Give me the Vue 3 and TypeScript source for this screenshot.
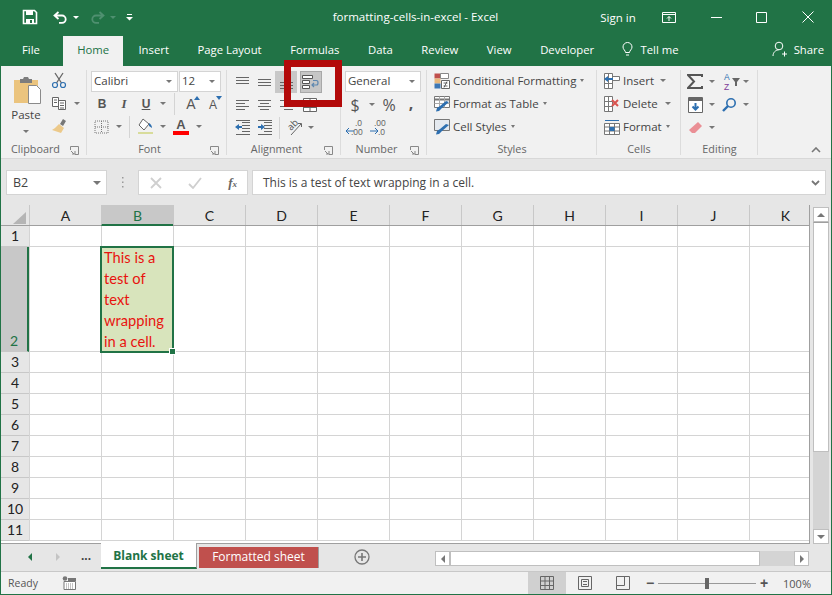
<script setup lang="ts">
type Seg = [number, number, number];
const lineIcons: Record<string, Seg[]> = {
  top: [[2, 15, 3], [2, 15, 6], [2, 15, 9]],
  mid: [[2, 15, 5], [2, 15, 8], [2, 15, 11]],
  bot: [[2, 15, 8], [2, 15, 11], [2, 15, 14]],
  left: [[2, 15, 3], [2, 11, 6], [2, 15, 9], [2, 11, 12]],
  center: [[2, 15, 3], [4, 13, 6], [2, 15, 9], [4, 13, 12]],
  right: [[2, 15, 3], [6, 15, 6], [2, 15, 9], [6, 15, 12]],
};
const tabs = ["Insert", "Page Layout", "Formulas", "Data", "Review", "View", "Developer"];
const columns = ["A", "B", "C", "D", "E", "F", "G", "H", "I", "J", "K"];
const rows = [1, 2, 3, 4, 5, 6, 7, 8, 9, 10, 11];
const wrapped = "This is a test of text wrapping in a cell.";
</script>

<template>
  <div class="app">
    <header class="titlebar">
      <div class="qat">
        <svg class="save" width="16" height="16" viewBox="0 0 16 16"><path d="M1.5 1.5h11l2 2v11h-13z" fill="none" stroke="#fff" stroke-width="1.6"/><path d="M4 2h7v4H4zM4 10h8v5H4z" fill="#fff"/><path d="M8 11h2v3H8z" fill="#217346"/></svg>
        <svg class="undo" width="15" height="13" viewBox="0 0 15 13"><path d="M5.5 1 1.5 4.5l4 3.500M2 4.500h7a3.700 3.700 0 0 1 0 7.400H6" fill="none" stroke="#fff" stroke-width="1.800"/></svg>
        <i class="caret white"></i>
        <svg class="redo" width="15" height="13" viewBox="0 0 15 13"><path d="M9.500 1l4 3.500-4 3.500M13 4.500H6a3.700 3.700 0 0 0 0 7.400h3" fill="none" stroke="#4f9070" stroke-width="1.800"/></svg>
        <i class="caret dim"></i>
        <svg class="custom" width="7" height="8" viewBox="0 0 7 8"><path d="M1 1h5v1H1zM0 4h7L3.500 7.500z" fill="#fff"/></svg>
      </div>
      <div class="title">formatting-cells-in-excel - Excel</div>
      <div class="winctl">
        <span class="signin">Sign in</span>
        <svg class="ctl-display" width="14" height="11" viewBox="0 0 14 11"><path d="M.5.500h13v10H.5zM.5 2.500h13M7 9V4.500M5 6.500l2-2 2 2" fill="none" stroke="#fff"/></svg>
        <svg class="ctl-min" width="11" height="11" viewBox="0 0 11 11"><path d="M0 5.500h11" stroke="#fff"/></svg>
        <svg class="ctl-max" width="11" height="11" viewBox="0 0 11 11"><path d="M.5.500h10v10H.5z" fill="none" stroke="#fff"/></svg>
        <svg class="ctl-close" width="12" height="12" viewBox="0 0 12 12"><path d="M.5.500l11 11M11.500.500l-11 11" stroke="#fff"/></svg>
      </div>
    </header>

    <nav class="tabbar">
      <span class="tab file">File</span>
      <span class="tab home">Home</span>
      <span v-for="t in tabs" :key="t" class="tab">{{ t }}</span>
      <span class="tellme">
        <svg width="11" height="15" viewBox="0 0 11 15"><path d="M3.500 10.500C3.500 8.500 1 7.500 1 5a4.500 4.500 0 0 1 9 0c0 2.500-2.500 3.500-2.500 5.500zM4 13h3" fill="none" stroke="#fff"/></svg>
        Tell me
      </span>
      <span class="share">
        <svg width="16" height="16" viewBox="0 0 16 16"><circle cx="7" cy="5" r="3.800" fill="none" stroke="#fff"/><path d="M1 15c0-3.500 2.500-6 5.500-6M10 13h5M12.500 10.500v5" fill="none" stroke="#fff"/></svg>
        Share
      </span>
    </nav>

    <section class="ribbon">
      <div class="group clipboard">
        <div class="body clip-body">
          <div class="paste">
            <svg width="30" height="28" viewBox="0 0 30 28"><rect x="1" y="3" width="24" height="23" fill="#ebc47e"/><path d="M7 2h3l1-2h4l1 2h3v4H7z" fill="#7d7d7d"/><path d="M15.500 8.500h8l4 4v14h-12z" fill="#fff" stroke="#8a8a8a"/></svg>
            <span>Paste</span>
            <i class="caret"></i>
          </div>
          <div class="clip-tools">
            <svg width="16" height="17" viewBox="0 0 16 17"><path d="M4 1l6.500 10M12 1 5.500 11" stroke="#666" stroke-width="1.300"/><circle cx="4" cy="13" r="2.500" fill="none" stroke="#2d6fb0" stroke-width="1.200"/><circle cx="12" cy="13" r="2.500" fill="none" stroke="#2d6fb0" stroke-width="1.200"/></svg>
            <span class="tool-row">
              <svg width="16" height="15" viewBox="0 0 16 15"><path d="M1.500 1.500h6v9h-6zM7.500 4.500h7v9h-7zM3 4h3M3 6.500h3M9 7h4M9 9.500h4M9 12h4" fill="#fff" stroke="#666"/></svg>
              <i class="caret"></i>
            </span>
            <svg width="16" height="16" viewBox="0 0 16 16"><path d="M9 6l3-5 3 2-3 5z" fill="#777"/><path d="M8 6l5 4-3 5-9-3 3-2z" fill="#ecc98a"/></svg>
          </div>
        </div>
        <div class="label lab-launch clip-label">Clipboard</div>
        <svg class="launcher" width="9" height="9" viewBox="0 0 9 9"><path d="M.5 4V.5h8v8H5M1 5l3 3M2 8h3V5" fill="none" stroke="#888"/></svg>
      </div>

      <div class="group font">
        <div class="body">
          <div class="row combos">
            <div class="combo font-name">Calibri<i class="caret"></i></div>
            <div class="combo font-size">12<i class="caret"></i></div>
          </div>
          <div class="row font-row2">
            <span class="ib fmt b">B</span>
            <span class="ib fmt it">I</span>
            <span class="ib fmt un">U</span>
            <span class="cw"><i class="caret"></i></span>
            <span class="vsep"></span>
            <span class="ib grow">A<svg width="6" height="4" viewBox="0 0 6 4"><path d="M0 4l3-4 3 4z" fill="#2d6fb0"/></svg></span>
            <span class="ib shrink">A<svg width="6" height="4" viewBox="0 0 6 4"><path d="M0 0h6L3 4z" fill="#2d6fb0"/></svg></span>
          </div>
          <div class="row font-row3">
            <span class="ib">
              <svg width="16" height="14" viewBox="0 0 16 14"><path d="M1 1h13v12H1zM7.500 1v12M1 7h13" fill="none" stroke="#777" stroke-dasharray="1 1"/></svg>
            </span>
            <span class="cw"><i class="caret"></i></span>
            <span class="vsep"></span>
            <span class="ib">
              <svg width="18" height="17" viewBox="0 0 18 17"><path d="M6 1l6 5-5 6-5-5z" fill="#fff" stroke="#666"/><path d="M12 5c2 1 3 3 3 5l-3-2z" fill="#2d6fb0"/><path d="M1 14h15v2H1z" fill="#d8dc9b"/></svg>
            </span>
            <span class="cw"><i class="caret"></i></span>
            <span class="ib color">A<b></b></span>
            <span class="cw"><i class="caret"></i></span>
          </div>
        </div>
        <div class="label lab-launch">Font</div>
        <svg class="launcher" width="9" height="9" viewBox="0 0 9 9"><path d="M.5 4V.5h8v8H5M1 5l3 3M2 8h3V5" fill="none" stroke="#888"/></svg>
      </div>

      <div class="group align">
        <div class="body">
          <div class="row">
            <span class="ib"><svg width="17" height="16" viewBox="0 0 17 16"><path v-for="(s, i) in lineIcons.top" :key="i" :d="`M${s[0]} ${s[2]}.5H${s[1]}`" stroke="#666"/></svg></span>
            <span class="ib"><svg width="17" height="16" viewBox="0 0 17 16"><path v-for="(s, i) in lineIcons.mid" :key="i" :d="`M${s[0]} ${s[2]}.5H${s[1]}`" stroke="#666"/></svg></span>
            <span class="ib on-soft"><svg width="17" height="16" viewBox="0 0 17 16"><path v-for="(s, i) in lineIcons.bot" :key="i" :d="`M${s[0]} ${s[2]}.5H${s[1]}`" stroke="#666"/></svg></span>
            <span class="ib wrap on">
              <svg width="18" height="16" viewBox="0 0 18 16"><path d="M.5 1.500h10v3H.5zM.5 6.500h7v3H.5zM.5 11.500h7v3H.5z" fill="#fff" stroke="#555"/><path d="M11 6.500h3.500c2 0 2 4.500 0 4.500H10M12 9l-2 2 2 2" fill="none" stroke="#5d87b0" stroke-width="1.200"/></svg>
            </span>
          </div>
          <div class="row">
            <span class="ib"><svg width="17" height="16" viewBox="0 0 17 16"><path v-for="(s, i) in lineIcons.left" :key="i" :d="`M${s[0]} ${s[2]}.5H${s[1]}`" stroke="#666"/></svg></span>
            <span class="ib"><svg width="17" height="16" viewBox="0 0 17 16"><path v-for="(s, i) in lineIcons.center" :key="i" :d="`M${s[0]} ${s[2]}.5H${s[1]}`" stroke="#666"/></svg></span>
            <span class="ib"><svg width="17" height="16" viewBox="0 0 17 16"><path v-for="(s, i) in lineIcons.right" :key="i" :d="`M${s[0]} ${s[2]}.5H${s[1]}`" stroke="#666"/></svg></span>
            <span class="ib wrap">
              <svg width="18" height="16" viewBox="0 0 18 16"><path d="M1.500 1.500h13v13h-13zM1.500 5.500h13M1.500 10.500h13M8 1.500v4M8 10.500v4" fill="#fff" stroke="#666"/></svg>
            </span>
          </div>
          <div class="row">
            <span class="ib"><svg width="17" height="16" viewBox="0 0 17 16"><path d="M8 2.500h8M8 5.500h8M8 8.500h8M8 11.500h8M2 14.500h14M2 .5h14" stroke="#666"/><path d="M1 7l4-3v2h3v2H5v2z" fill="#2d6fb0"/></svg></span>
            <span class="ib"><svg width="17" height="16" viewBox="0 0 17 16"><path d="M8 2.500h8M8 5.500h8M8 8.500h8M8 11.500h8M2 14.500h14M2 .5h14" stroke="#666"/><path d="M9 7 5 4v2H2v2h3v2z" fill="#2d6fb0"/></svg></span>
            <span class="vsep"></span>
            <span class="ib orient"><svg width="18" height="16" viewBox="0 0 18 16"><path d="M4 15 14 4M11 3.500h3.500V7" fill="none" stroke="#666"/></svg><em>ab</em></span>
            <span class="cw narrow"><i class="caret"></i></span>
          </div>
        </div>
        <div class="label lab-launch">Alignment</div>
        <svg class="launcher" width="9" height="9" viewBox="0 0 9 9"><path d="M.5 4V.5h8v8H5M1 5l3 3M2 8h3V5" fill="none" stroke="#888"/></svg>
      </div>

      <div class="group number">
        <div class="body">
          <div class="row"><div class="combo num-format">General<i class="caret"></i></div></div>
          <div class="row num-row2">
            <span class="ib sym">$</span>
            <span class="cw"><i class="caret"></i></span>
            <span class="ib sym pct">%</span>
            <span class="ib sym comma">,</span>
          </div>
          <div class="row num-row3">
            <span class="ib dec"><svg width="8" height="6" viewBox="0 0 8 6"><path d="M3 0 0 3l3 3M0 3h8" fill="none" stroke="#2d6fb0"/></svg><small class="d1">.0</small><small class="d2">.00</small></span>
            <span class="ib dec"><small class="d1 r">.00</small><svg class="ar" width="8" height="6" viewBox="0 0 8 6"><path d="M5 0l3 3-3 3M8 3H0" fill="none" stroke="#2d6fb0"/></svg><small class="d2 r">.0</small></span>
          </div>
        </div>
        <div class="label lab-launch">Number</div>
        <svg class="launcher" width="9" height="9" viewBox="0 0 9 9"><path d="M.5 4V.5h8v8H5M1 5l3 3M2 8h3V5" fill="none" stroke="#888"/></svg>
      </div>

      <div class="group styles">
        <div class="body">
          <div class="cmd">
            <svg width="16" height="16" viewBox="0 0 16 16"><path d="M.5.500h6v5h-6z" fill="#c0504d"/><path d="M6.500.500h8v5h-8z" fill="#fff" stroke="#888"/><path d="M.5 5.500h6v5h-6z" fill="#e9b87c"/><path d="M.5 10.500h6v5h-6z" fill="#3e78b5"/><path d="M7.500 7.500h8v8h-8z" fill="#fff" stroke="#666"/><path d="M9.500 10h4M9.500 13h4M10 14.500l3-6" stroke="#444" stroke-width=".8"/></svg>
            Conditional Formatting<i class="caret sm"></i>
          </div>
          <div class="cmd">
            <svg width="16" height="16" viewBox="0 0 16 16"><path d="M.5.500h15v11H.5z" fill="#fff" stroke="#777"/><path d="M.5 3.500h15" stroke="#777" stroke-width="2"/><path d="M5.500.500v11M10.500.500v11M.5 7.500h15" stroke="#aaa"/><path d="M15 6 8 12 5 15 2 15.500 3 12 6 10 12 5z" fill="#2d6fb0"/></svg>
            Format as Table<i class="caret sm"></i>
          </div>
          <div class="cmd">
            <svg width="16" height="16" viewBox="0 0 16 16"><path d="M.5.500h15v11H.5z" fill="#e4e9ef" stroke="#777"/><path d="M15 6 8 12 5 15 2 15.500 3 12 6 10 12 5z" fill="#2d6fb0"/></svg>
            Cell Styles<i class="caret sm"></i>
          </div>
        </div>
        <div class="label">Styles</div>
      </div>

      <div class="group cells">
        <div class="body">
          <div class="cmd">
            <svg width="16" height="16" viewBox="0 0 16 16"><path d="M.5.500h8v15h-8zM.5 5.500h8M.5 10.500h8M4.500.500v15M8.500 3.500h7v4h-7z" fill="#fff" stroke="#777"/><path d="M0 6l4-3v2h5v2H4v2z" fill="#2d6fb0"/></svg>
            Insert<i class="caret wide1"></i>
          </div>
          <div class="cmd">
            <svg width="16" height="16" viewBox="0 0 16 16"><path d="M.5.500h8v15h-8zM.5 5.500h8M.5 10.500h8M4.500.500v15" fill="#fff" stroke="#777"/><path d="M8 4l6 6M14 4l-6 6" stroke="#d9534f" stroke-width="2"/></svg>
            Delete<i class="caret wide2"></i>
          </div>
          <div class="cmd">
            <svg width="16" height="16" viewBox="0 0 16 16"><path d="M.5 4.500h15v11H.5zM.5 8h15M.5 12h15M5.500 4.500v11M10.500 4.500v11" fill="#fff" stroke="#777"/><path d="M5.500 8h5v4h-5z" fill="#2d6fb0"/><path d="M1 1.500h14" stroke="#2d6fb0"/></svg>
            Format<i class="caret sm"></i>
          </div>
        </div>
        <div class="label">Cells</div>
      </div>

      <div class="group editing">
        <div class="body">
          <div class="row ed-row">
            <span class="ib"><svg width="16" height="15" viewBox="0 0 16 15"><path d="M15 3V1H1l6 6.500L1 14h14v-2" fill="none" stroke="#555" stroke-width="2"/></svg></span>
            <span class="cw"><i class="caret"></i></span>
            <span class="ib az"><b>A</b><b>Z</b><svg width="8" height="8" viewBox="0 0 8 8"><path d="M0 0h8L5 4v4H3V4z" fill="#666"/></svg></span>
            <span class="cw tight"><i class="caret"></i></span>
          </div>
          <div class="row ed-row">
            <span class="ib"><svg width="15" height="16" viewBox="0 0 15 16"><path d="M.5.500h14v15H.5z" fill="#fff" stroke="#666"/><path d="M1 1h13v3H1z" fill="#666"/><path d="M7.500 6v6M4.500 9.500l3 3 3-3" fill="none" stroke="#2d6fb0" stroke-width="2"/></svg></span>
            <span class="cw"><i class="caret"></i></span>
            <span class="ib"><svg width="16" height="16" viewBox="0 0 16 16"><circle cx="10" cy="6" r="4.200" fill="none" stroke="#2d6fb0" stroke-width="1.600"/><path d="M7 9l-5 5" stroke="#2d6fb0" stroke-width="2.400"/></svg></span>
            <span class="cw tight"><i class="caret"></i></span>
          </div>
          <div class="row ed-row">
            <span class="ib"><svg width="15" height="14" viewBox="0 0 15 14"><path d="M10 1l4 4-7 7H4L1 9z" fill="#ea8f95"/></svg></span>
            <span class="cw"><i class="caret"></i></span>
          </div>
        </div>
        <div class="label">Editing</div>
      </div>

      <svg class="collapse" width="10" height="6" viewBox="0 0 10 6"><path d="M1 5l4-4 4 4" fill="none" stroke="#777" stroke-width="1.600"/></svg>
    </section>

    <section class="formula">
      <div class="namebox">B2<i class="caret big"></i></div>
      <svg class="grip" width="3" height="11" viewBox="0 0 3 11"><path d="M1 0h1.500v1.500H1zM1 4.500h1.500V6H1zM1 9h1.500v1.500H1z" fill="#999"/></svg>
      <div class="fx-box">
        <svg width="12" height="12" viewBox="0 0 12 12"><path d="M1 1l10 10M11 1 1 11" stroke="#cfcfcf" stroke-width="1.800"/></svg>
        <svg width="14" height="12" viewBox="0 0 14 12"><path d="M1 7l4 4 8-10" fill="none" stroke="#cfcfcf" stroke-width="1.800"/></svg>
        <span class="fx">f<small>x</small></span>
      </div>
      <div class="input">This is a test of text wrapping in a cell.<svg width="9" height="6" viewBox="0 0 9 6"><path d="M1 1l3.500 3.500L8 1" fill="none" stroke="#777" stroke-width="1.800"/></svg></div>
    </section>

    <section class="main">
      <div class="sheet">
        <div class="colhead">
          <div class="corner"><svg width="13" height="12" viewBox="0 0 13 12"><path d="M13 0v12H0z" fill="#b5b5b5"/></svg></div>
          <div v-for="c in columns" :key="c" class="col" :class="{ sel: c === 'B' }">{{ c }}</div>
        </div>
        <div v-for="r in rows" :key="r" class="gridrow" :class="{ tall: r === 2 }">
          <div class="rowhead" :class="{ sel: r === 2 }">{{ r }}</div>
          <div v-for="c in columns" :key="c" class="cell" :class="{ active: r === 2 && c === 'B' }">
            <template v-if="r === 2 && c === 'B'">{{ wrapped }}</template>
          </div>
        </div>
      </div>
      <div class="vscroll">
        <div class="sbtn"><i class="tri up"></i></div>
        <div class="vthumb"></div>
        <div class="vtrack"></div>
        <div class="sbtn"><i class="tri down"></i></div>
      </div>
    </section>

    <section class="sheetbar">
      <div class="nav">
        <i class="tri left green"></i>
        <i class="tri right faint"></i>
        <b class="dots">...</b>
      </div>
      <div class="stab active">Blank sheet</div>
      <div class="stab colored">Formatted sheet</div>
      <svg class="plus" width="16" height="16" viewBox="0 0 16 16"><circle cx="8" cy="8" r="7" fill="none" stroke="#777" stroke-width="1.300"/><path d="M8 4v8M4 8h8" stroke="#777" stroke-width="1.600"/></svg>
      <div class="hscroll">
        <div class="hbtn"><i class="tri left"></i></div>
        <div class="hthumb"></div>
        <div class="htrack"></div>
        <div class="hbtn"><i class="tri right"></i></div>
      </div>
    </section>

    <footer class="status">
      <span class="ready">Ready</span>
      <svg class="macro" width="14" height="14" viewBox="0 0 14 14"><circle cx="3" cy="2.500" r="2.300" fill="#777"/><path d="M2 5.500h11.500v8H2z" fill="#fff" stroke="#777"/><path d="M6 2h8v3H6z" fill="#777"/><path d="M4 8h8M4 10h8M4 12h8" stroke="#888" stroke-dasharray="1 1"/></svg>
      <div class="views">
        <span class="view on"><svg width="14" height="14" viewBox="0 0 14 14"><path d="M.5.500h13v13H.5zM.5 5h13M.5 9.500h13M5 .5v13M9.500.5v13" fill="none" stroke="#666"/></svg></span>
        <span class="view"><svg width="14" height="14" viewBox="0 0 14 14"><path d="M.5.500h13v13H.5z" fill="none" stroke="#666"/><path d="M3.500 3.500h7v7h-7zM5 5.500h4M5 8.500h4" fill="none" stroke="#666"/></svg></span>
        <span class="view"><svg width="14" height="14" viewBox="0 0 14 14"><path d="M.5.500h13v13H.5zM.5 9.500h8V.5" fill="none" stroke="#666"/></svg></span>
      </div>
      <div class="zoom">
        <span class="zbtn">−</span>
        <span class="slider"><b></b></span>
        <span class="zbtn">+</span>
      </div>
      <span class="pct-label">100%</span>
    </footer>

    <div class="callout"></div>
  </div>
</template>

<style>
html, body { margin: 0; padding: 0; }
</style>

<style scoped>
.app {
  position: relative;
  width: 832px;
  height: 595px;
  box-sizing: border-box;
  border: 1px solid #217346;
  border-top: 0;
  display: flex;
  flex-direction: column;
  overflow: hidden;
  background: #e6e6e6;
  font-family: "Open Sans", "Noto Sans", sans-serif;
  font-size: 11.5px;
  color: #444;
}
.titlebar {
  height: 36px;
  flex: none;
  background: #217346;
  display: grid;
  grid-template-columns: 1fr auto 1fr;
  align-items: center;
  color: #fff;
  font-size: 11.5px;
}
.qat { display: flex; align-items: center; padding-left: 21px; padding-bottom: 2px; }
.undo { margin-left: 15px; }
.qat .caret { margin-left: 5px; }
.redo { margin-left: 11px; }
.custom { margin-left: 10px; }
.caret {
  display: inline-block;
  width: 0;
  height: 0;
  border-left: 3px solid transparent;
  border-right: 3px solid transparent;
  border-top: 3px solid #777;
}
.caret.white { border-top-color: #fff; }
.caret.dim { border-top-color: #4f9070; }
.caret.sm { border-left-width: 2.500px; border-right-width: 2.500px; margin-left: 1px; }
.caret.big { border-left-width: 4px; border-right-width: 4px; border-top-width: 4px; }
.title { text-align: center; padding-bottom: 4px; margin-left: -1px; }
.winctl { display: flex; align-items: center; padding-left: 102px; padding-bottom: 2px; }
.ctl-display { margin-left: 26px; }
.ctl-min { margin-left: 35px; }
.ctl-max { margin-left: 34px; }
.ctl-close { margin-left: 35px; }

.tabbar {
  height: 30px;
  flex: none;
  background: #217346;
  display: flex;
  align-items: stretch;
  color: #fff;
  font-size: 11.300px;
}
.tab {
  padding: 0 14.300px 4px;
  display: flex;
  align-items: center;
}
.tab.file { margin-left: 6.700px; }
.tab.home {
  margin-left: 9px;
  margin-right: 1px;
  width: 60px;
  box-sizing: border-box;
  justify-content: center;
  background: #f1f1f1;
  color: #217346;
}
.tellme { display: flex; align-items: center; gap: 7px; margin-left: 14px; padding-bottom: 4px; }
.share { display: flex; align-items: center; gap: 6px; margin-left: auto; padding: 0 7px 4px 0; }

.ribbon {
  position: relative;
  height: 92px;
  flex: none;
  display: flex;
  background: #f1f1f1;
  border-bottom: 1px solid #d8d8d8;
}
.group {
  position: relative;
  display: flex;
  flex-direction: column;
  box-sizing: border-box;
  padding-top: 4px;
}
.group::after {
  content: "";
  position: absolute;
  right: 0;
  top: 4px;
  bottom: 3px;
  width: 1px;
  background: #dcdcdc;
}
.clipboard { width: 86px; }
.font { width: 140px; }
.align { width: 114px; }
.number { width: 86px; }
.styles { width: 170px; }
.cells { width: 84px; }
.editing { width: 77px; }
.body { height: 71px; }
.label {
  text-align: center;
  font-size: 10.800px;
  color: #666;
  line-height: 18px;
}
.lab-launch { padding-right: 15px; }
.clip-label { padding-right: 17px; }
.launcher { position: absolute; right: 8px; bottom: 3px; }
.row { display: flex; align-items: center; height: 23px; }
.ib {
  width: 22px;
  height: 22px;
  display: inline-flex;
  align-items: center;
  justify-content: center;
  flex: none;
  box-sizing: border-box;
}
.cw { width: 12px; display: inline-flex; justify-content: center; flex: none; }
.vsep { width: 1px; height: 22px; background: #d4d4d4; flex: none; }

.clip-body { display: flex; }
.paste {
  width: 40px;
  margin-left: 7px;
  display: flex;
  flex-direction: column;
  align-items: center;
  padding-top: 7px;
  box-sizing: border-box;
  color: #444;
}
.paste span { line-height: 17px; margin: 1px 4px 0 0; }
.paste .caret { margin: 7px 5px 0 0; }
.clip-tools {
  display: flex;
  flex-direction: column;
  align-items: flex-start;
  padding: 2px 0 0 3px;
  gap: 7px;
}
.tool-row { display: flex; align-items: center; gap: 7px; height: 15px; }

.font .body { padding-left: 3px; }
.combos { gap: 1px; height: 22px; margin-left: 1px; }
.combo {
  height: 21px;
  box-sizing: border-box;
  background: #fff;
  border: 1px solid #d4d4d4;
  display: flex;
  align-items: center;
  justify-content: space-between;
  padding: 0 5px 2px 2px;
  font-size: 11.500px;
}
.combo .caret { margin-top: 2px; }
.font-name { width: 87px; }
.font-size { width: 42px; }
.fmt { font-family: "Liberation Sans", sans-serif; font-size: 12px; color: #555; }
.fmt.b { font-weight: 700; }
.fmt.it { font-style: italic; font-family: "Liberation Serif", serif; font-weight: 700; font-size: 13px; }
.fmt.un { text-decoration: underline; font-weight: 700; }
.font-row2 .vsep { margin: 0 5px 0 5px; }
.font-row2 { padding-left: 1px; }
.grow, .shrink { font-family: "Liberation Sans", sans-serif; color: #555; font-size: 14px; position: relative; }
.shrink { font-size: 12px; padding-top: 2px; }
.grow svg, .shrink svg { position: absolute; right: 2px; top: 3px; }
.font-row3 { padding-left: 1px; }
.font-row3 .vsep { margin: 0 5px 0 4px; }
.font-row3 .cw { width: 12px; }
.color {
  flex-direction: column;
  color: #555;
  font-family: "Liberation Sans", sans-serif;
  font-size: 13px;
  font-weight: 700;
  line-height: 13px;
  width: 24px;
}
.color b { display: block; width: 16px; height: 4px; background: #f00; }

.align .body { padding-left: 4px; }
.on-soft { background: #c8c8c8; }
.ib.wrap { margin-left: 3px; }
.ib.on { background: #c6c6c6; border: 1px solid #a8a8a8; }
.align .vsep { margin: 0 5px 0 4px; }
.orient { position: relative; }
.orient em {
  position: absolute;
  font-style: normal;
  font-size: 9.500px;
  color: #555;
  transform: rotate(-45deg);
  left: 2px;
  top: 1px;
}
.narrow { width: 8px; }

.number .body { padding-left: 4px; }
.num-format { width: 76px; }
.num-row2 { padding-left: 0; margin-left: -1px; }
.num-row2 .cw { width: 12px; }
.sym { font-size: 16px; color: #555; }
.comma { font-weight: 700; padding-bottom: 4px; }
.num-row3 { margin-left: -2px; gap: 1px; }
.dec { position: relative; font-size: 8.500px; flex-direction: column; align-items: flex-start; padding-left: 3px; color: #666; }
.dec svg { position: absolute; left: 3px; top: 11px; }
.dec small { font-size: 8.500px; line-height: 9px; font-family: "Liberation Sans", sans-serif; }
.d1 { padding-left: 9px; }
.d2 { padding-left: 5px; }
.d1.r { padding-left: 5px; }
.d2.r { padding-left: 9px; margin-top: 0; }
.dec .ar { left: 4px; }

.styles .body, .cells .body { padding-left: 7px; }
.cmd {
  display: flex;
  align-items: center;
  height: 23px;
  box-sizing: border-box;
  padding-bottom: 2px;
  gap: 3px;
  white-space: nowrap;
  color: #444;
}
.cmd .caret { border-top-width: 3px; }
.wide1 { margin-left: 3px; }
.wide2 { margin-left: 4px; }

.ed-row { padding-left: 3px; }
.ed-row .cw { width: 12px; }
.az { position: relative; flex-direction: column; align-items: flex-start; padding-left: 6px; font-family: "Liberation Sans", sans-serif; }
.az b { font-weight: 400; font-size: 8.500px; line-height: 10px; color: #2d6fb0; }
.az b + b { color: #7d3c98; }
.az svg { position: absolute; right: 0; top: 7px; }
.tight { width: 10px; }
.collapse { position: absolute; right: 10px; bottom: 5px; }

.formula {
  height: 46px;
  flex: none;
  box-sizing: border-box;
  padding-top: 11px;
  display: flex;
  align-items: flex-start;
  background: #e6e6e6;
}
.namebox, .fx-box, .input {
  height: 25px;
  box-sizing: border-box;
  background: #fff;
  border: 1px solid #d4d4d4;
  display: flex;
  align-items: center;
}
.namebox {
  width: 101px;
  margin-left: 5px;
  justify-content: space-between;
  padding: 0 5px 0 6px;
  font-size: 12.500px;
}
.grip { margin: 7px 14px 0 14px; }
.fx-box { width: 110px; padding: 0 10px 0 11px; justify-content: space-between; }
.fx { font-family: "Liberation Serif", serif; font-style: italic; font-weight: 700; font-size: 13px; color: #666; }
.fx small { font-size: 9px; }
.input {
  width: 574px;
  margin-left: 4px;
  justify-content: space-between;
  padding: 0 5px 0 10px;
  font-size: 12px;
}

.main {
  height: 339px;
  flex: none;
  display: flex;
  background: #e6e6e6;
}
.sheet {
  width: 809px;
  flex: none;
  height: 339px;
  box-sizing: border-box;
  border-right: 1px solid #9f9f9f;
  border-bottom: 1px solid #9f9f9f;
  background: #fff;
  overflow: hidden;
  font-family: Lato, sans-serif;
  font-size: 14px;
  color: #222;
}
.colhead {
  display: flex;
  height: 21px;
  box-sizing: border-box;
  border-bottom: 1px solid #9f9f9f;
  background: #e6e6e6;
}
.corner {
  width: 28px;
  flex: none;
  box-sizing: border-box;
  padding: 5px 0 0 12px;
}
.col {
  width: 72px;
  flex: none;
  box-sizing: border-box;
  text-align: center;
  line-height: 22px;
  border-left: 1px solid #c8c8c8;
}
.col.sel {
  background: #c8c8c8;
  color: #217346;
  border-bottom: 2px solid #217346;
  height: 21px;
}
.gridrow { display: flex; height: 21px; }
.gridrow.tall { height: 105px; }
.rowhead {
  width: 28px;
  flex: none;
  box-sizing: border-box;
  background: #e6e6e6;
  border-bottom: 1px solid #c8c8c8;
  display: flex;
  align-items: flex-end;
  justify-content: center;
  line-height: 20px;
}
.rowhead.sel {
  background: #c8c8c8;
  color: #217346;
  border-right: 2px solid #217346;
}
.cell {
  width: 72px;
  flex: none;
  box-sizing: border-box;
  border-left: 1px solid #d4d4d4;
  border-bottom: 1px solid #d4d4d4;
}
.gridrow .cell:first-of-type { border-left-color: #c8c8c8; }
.cell.active {
  position: relative;
  z-index: 2;
  background: #d8e4bc;
  color: #e8130f;
  outline: 2px solid #217346;
  outline-offset: -1px;
  border: 0;
  padding: 0 2px 0 3px;
  display: flex;
  align-items: flex-end;
  font-size: 14.700px;
  line-height: 21px;
}
.cell.active::after {
  content: "";
  position: absolute;
  right: -3px;
  bottom: -3px;
  width: 5px;
  height: 5px;
  background: #217346;
  border: 1px solid #fff;
}
.vscroll {
  width: 16px;
  margin: 2px 0 0 3px;
  height: 337px;
  display: flex;
  flex-direction: column;
}
.sbtn, .hbtn {
  flex: none;
  background: #fff;
  border: 1px solid #bfbfbf;
  box-sizing: border-box;
  display: flex;
  align-items: center;
  justify-content: center;
}
.sbtn { height: 15px; }
.vthumb { height: 230px; flex: none; background: #fff; border: 1px solid #bfbfbf; border-top-color: #9f9f9f; box-sizing: border-box; }
.vtrack { flex: 1; background: #d4d4d4; }
.tri { display: inline-block; width: 0; height: 0; }
.tri.up { border-left: 4px solid transparent; border-right: 4px solid transparent; border-bottom: 4px solid #777; }
.tri.down { border-left: 4px solid transparent; border-right: 4px solid transparent; border-top: 4px solid #777; }
.tri.left { border-top: 4px solid transparent; border-bottom: 4px solid transparent; border-right: 4px solid #777; }
.tri.right { border-top: 4px solid transparent; border-bottom: 4px solid transparent; border-left: 4px solid #777; }
.tri.green { border-right-color: #217346; }
.tri.faint { border-left-color: #c4c4c4; }

.sheetbar {
  height: 28px;
  flex: none;
  display: flex;
  align-items: flex-start;
  background: #e6e6e6;
  border-bottom: 1px solid #c8c8c8;
  box-sizing: border-box;
  position: relative;
}
.nav { width: 100px; display: flex; align-items: center; height: 25px; padding-left: 27px; box-sizing: border-box; }
.nav .right { margin-left: 24px; }
.dots { margin-left: 21px; font-family: "Liberation Sans", sans-serif; color: #444; font-size: 12px; padding-bottom: 2px; }
.stab { height: 25px; display: flex; align-items: center; justify-content: center; box-sizing: border-box; font-size: 12px; }
.stab.active {
  width: 96px;
  margin-top: -1px;
  height: 26px;
  background: #fff;
  color: #217346;
  font-weight: 700;
  border-bottom: 2px solid #217346;
  border-right: 1px solid #9f9f9f;
}
.stab.colored {
  width: 120px;
  height: 21px;
  margin: 3px 0 0 2px;
  padding-bottom: 2px;
  background: #c0504d;
  color: #fff;
  border-right: 1px solid #9f9f9f;
}
.plus { margin: 5px 0 0 35px; }
.hscroll {
  margin: 7px 0 0 65px;
  width: 374px;
  height: 15px;
  display: flex;
}
.hbtn { width: 15px; }
.hthumb { width: 310px; background: #fff; border: 1px solid #bfbfbf; box-sizing: border-box; }
.htrack { flex: 1; background: #d4d4d4; }
.status {
  flex: 1;
  min-height: 0;
  display: flex;
  align-items: center;
  background: #f1f1f1;
  font-size: 10.500px;
  color: #555;
}
.ready { margin-left: 7px; }
.macro { margin-left: 24px; }
.views { display: flex; margin-left: auto; align-items: stretch; height: 100%; }
.view { width: 38px; display: flex; align-items: center; justify-content: center; }
.view.on { background: #d0d0d0; }
.zoom { display: flex; align-items: center; margin-left: 2px; }
.zbtn { font-family: "Liberation Sans", sans-serif; font-weight: 700; font-size: 14px; color: #555; width: 12px; text-align: center; }
.slider { position: relative; width: 98px; height: 1px; background: #999; margin: 0 2px; }
.slider b { position: absolute; left: 47px; top: -5px; width: 4px; height: 11px; background: #666; }
.pct-label { margin: 0 20px 0 13px; font-size: 11px; }

.callout {
  position: absolute;
  left: 283px;
  top: 60px;
  width: 58px;
  height: 47px;
  box-sizing: border-box;
  border: 7px solid #b30a0a;
  pointer-events: none;
  z-index: 5;
}
</style>
